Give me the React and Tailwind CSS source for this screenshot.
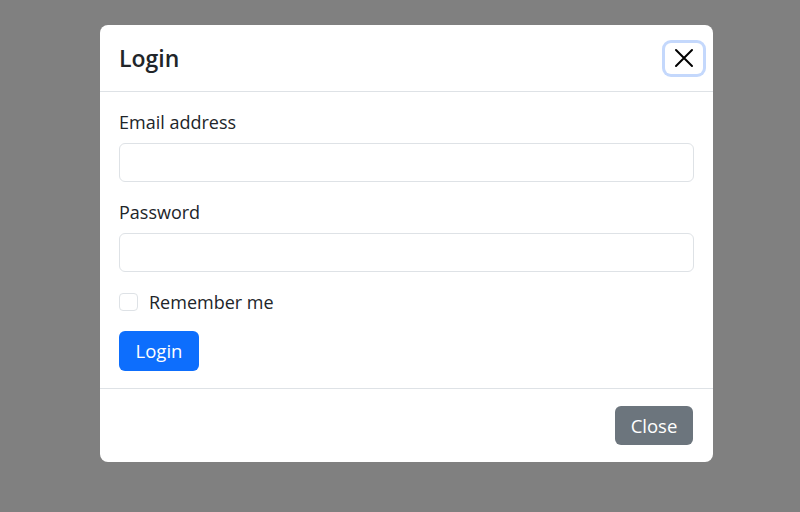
import React from 'react';

const App = () => {
  return (
    <div
      className="w-[800px] h-[512px] bg-[#808080] pt-[25px] pl-[100px] overflow-hidden"
      style={{ fontFamily: '"Open Sans", "Noto Sans", sans-serif' }}
    >
      <div className="w-[613px] bg-white rounded-[8px] text-[#212529]">
        {/* header */}
        <div className="h-[67px] flex items-center justify-between pl-[19px] pr-[10px] border-b border-[#dee2e6]">
          <h5 className="text-[23px] font-semibold leading-none">Login</h5>
          <button className="w-[38px] h-[31px] rounded-[6px] ring-[3px] ring-[#c4d8fc] flex items-center justify-center">
            <svg width="20" height="20" viewBox="0 0 20 20">
              <path d="M2 2 L18 18 M18 2 L2 18" stroke="#000" strokeWidth="2" strokeLinecap="round" />
            </svg>
          </button>
        </div>

        {/* body */}
        <div className="px-[19px] pt-[18px] pb-[17px] text-[18px]">
          <label className="block h-[25px] leading-[25px]">Email address</label>
          <input type="email" className="mt-[8px] block w-full h-[39px] rounded-[6px] border border-[#dee2e6]" />

          <label className="block mt-[18px] h-[25px] leading-[25px]">Password</label>
          <input type="password" className="mt-[8px] block w-full h-[39px] rounded-[6px] border border-[#dee2e6]" />

          <div className="mt-[18px] h-[24px] flex items-center">
            <span className="w-[19px] h-[18px] rounded-[4px] border border-[#dee2e6] bg-white" />
            <span className="ml-[11px] leading-[24px]">Remember me</span>
          </div>

          <button className="mt-[17px] block w-[80px] h-[40px] rounded-[6px] bg-[#0d6efd] text-white text-[18.5px]">
            Login
          </button>
        </div>

        {/* footer */}
        <div className="border-t border-[#dee2e6] flex justify-end pt-[17px] pb-[17px] pr-[20px]">
          <button className="w-[78px] h-[39px] rounded-[6px] bg-[#6c757d] text-white text-[18.5px]">
            Close
          </button>
        </div>
      </div>
    </div>
  );
};

export default App;
